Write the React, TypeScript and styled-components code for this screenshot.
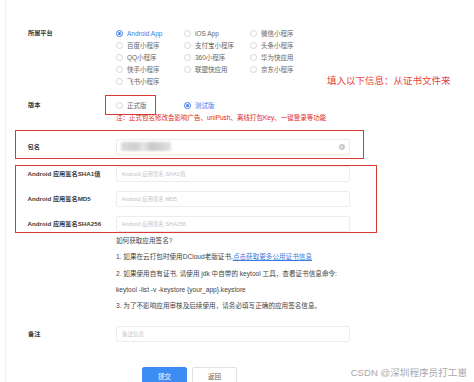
import React from "react";
import styled, { createGlobalStyle } from "styled-components";

const Global = createGlobalStyle`
  html, body { margin: 0; padding: 0; background: #fff; }
  body { font-family: "Liberation Sans", "Noto Sans CJK SC", sans-serif; }
  * { box-sizing: border-box; }
`;

const Page = styled.div`
  position: relative;
  height: 382px;
  overflow: hidden;
  margin-left: 5px;
  border-left: 1px solid #f0f0f0;
  padding: 27px 0 0 9px;
`;

const Row = styled.div<{ $align?: "start" | "center"; $gap?: number }>`
  display: grid;
  grid-template-columns: 88px auto;
  align-items: ${(p) => p.$align ?? "center"};
  padding-left: 13px;
  margin-top: ${(p) => p.$gap ?? 0}px;
`;

const PlatformRow = styled(Row)`
  grid-template-columns: 88px 211px auto;
`;

const Label = styled.div`
  font-size: 6.2px;
  line-height: 12px;
  font-weight: 700;
  color: #3a3a3a;
  white-space: nowrap;
`;

const OptionGrid = styled.div`
  display: grid;
  grid-template-columns: 68px 66px auto;
`;

const Option = styled.label<{ $on?: boolean }>`
  display: flex;
  align-items: center;
  gap: 4px;
  height: 12px;
  font-size: 6.5px;
  color: ${(p) => (p.$on ? "#3f78ee" : "#666")};
  white-space: nowrap;
`;

const Circle = styled.span<{ $on?: boolean }>`
  width: 7px;
  height: 7px;
  border-radius: 50%;
  border: 1px solid ${(p) => (p.$on ? "#3f78ee" : "#d6d6d6")};
  display: flex;
  align-items: center;
  justify-content: center;
  flex-shrink: 0;
  &::after {
    content: "";
    width: 3px;
    height: 3px;
    border-radius: 50%;
    background: ${(p) => (p.$on ? "#3f78ee" : "transparent")};
  }
`;

const Highlight = styled.span`
  position: relative;
  display: inline-flex;
  &::after {
    content: "";
    position: absolute;
    inset: -4px -9px -4px -11px;
    border: 1.5px solid #d93a33;
    pointer-events: none;
  }
`;

const Annotation = styled.div`
  align-self: end;
  font-size: 9.5px;
  line-height: 12px;
  color: #e5443d;
  white-space: nowrap;
`;

const Stack = styled.div`
  display: flex;
  flex-direction: column;
`;

const Note = styled.div`
  margin-top: 2px;
  font-size: 6.5px;
  line-height: 10px;
  color: #e0281e;
  white-space: nowrap;
`;

const Frame = styled.div<{ $width: number; $gap?: number }>`
  width: ${(p) => p.$width}px;
  border: 1.5px solid #d93a33;
  display: flex;
  flex-direction: column;
  gap: ${(p) => p.$gap ?? 0}px;
  ${Row} { padding-left: 11.5px; }
`;

const Frame1 = styled(Frame)`
  margin-top: 7px;
  padding: 7.5px 0 3.5px;
`;

const Frame2 = styled(Frame)`
  margin-top: 6px;
`;

const Input = styled.input`
  width: 234px;
  height: 16px;
  border: 1px solid #ececec;
  border-radius: 2px;
  padding: 0 5px;
  font-family: inherit;
  font-size: 5.5px;
  color: #333;
  outline: none;
  &::placeholder { color: #c2c2c2; }
`;

const Field = styled.div`
  width: 234px;
  height: 16px;
  border: 1px solid #ececec;
  border-radius: 2px;
  padding: 0 4px;
  display: flex;
  align-items: center;
`;

const Blurred = styled.div`
  width: 50px;
  height: 9px;
  background: linear-gradient(90deg, #dcdcdc 0%, #cfcfcf 30%, #e6e6e6 45%, #c8c8c8 60%, #d4d4d4 80%, #e2e2e2 100%);
  filter: blur(1.2px);
`;

const Clear = styled.span`
  margin-left: auto;
  width: 6px;
  height: 6px;
  border-radius: 50%;
  background: #c9c9c9;
  color: #fff;
  font-size: 5px;
  line-height: 6px;
  text-align: center;
`;

const Help = styled.div`
  font-size: 6.6px;
  line-height: 16.3px;
  color: #444;
  white-space: nowrap;
`;

const Link = styled.a`
  color: #3d7be0;
  text-decoration: underline;
`;

const ButtonBar = styled.div`
  margin-top: 24.5px;
  padding-left: 127px;
  display: flex;
  gap: 5px;
`;

const Button = styled.button<{ $primary?: boolean }>`
  width: 45px;
  height: 18px;
  border-radius: 2px;
  font-family: inherit;
  font-size: 6.5px;
  border: 1px solid ${(p) => (p.$primary ? "#3c8cf3" : "#e2e2e2")};
  background: ${(p) => (p.$primary ? "#3c8cf3" : "#fff")};
  color: ${(p) => (p.$primary ? "#fff" : "#555")};
  padding: 0;
`;

const Watermark = styled.div`
  position: absolute;
  right: 7px;
  bottom: 3px;
  font-size: 9.6px;
  line-height: 12px;
  color: #a8a8a8;
  white-space: nowrap;
`;

const platforms: [string, boolean][] = [
  ["Android App", true],
  ["iOS App", false],
  ["微信小程序", false],
  ["百度小程序", false],
  ["支付宝小程序", false],
  ["头条小程序", false],
  ["QQ小程序", false],
  ["360小程序", false],
  ["华为快应用", false],
  ["快手小程序", false],
  ["联盟快应用", false],
  ["京东小程序", false],
  ["飞书小程序", false],
];

export default function App() {
  return (
    <>
      <Global />
      <Page>
        <PlatformRow $align="start">
          <Label>所属平台</Label>
          <OptionGrid>
            {platforms.map(([name, on]) => (
              <Option key={name} $on={on}>
                <Circle $on={on} />
                {name}
              </Option>
            ))}
          </OptionGrid>
          <Annotation>填入以下信息：从证书文件来</Annotation>
        </PlatformRow>

        <Row $align="start" $gap={12}>
          <Label>版本</Label>
          <Stack>
            <OptionGrid>
              <Option>
                <Highlight>
                  <Option as="span">
                    <Circle />
                    正式版
                  </Option>
                </Highlight>
              </Option>
              <Option $on>
                <Circle $on />
                测试版
              </Option>
            </OptionGrid>
            <Note>注：正式包名修改会影响广告、uniPush、离线打包Key、一键登录等功能</Note>
          </Stack>
        </Row>

        <Frame1 $width={349}>
          <Row>
            <Label>包名</Label>
            <Field>
              <Blurred />
              <Clear>×</Clear>
            </Field>
          </Row>
        </Frame1>

        <Frame2 $width={362} $gap={9}>
          <Row>
            <Label>Android 应用签名SHA1值</Label>
            <Input placeholder="Android 应用签名 SHA1值" />
          </Row>
          <Row>
            <Label>Android 应用签名MD5</Label>
            <Input placeholder="Android 应用签名 MD5" />
          </Row>
          <Row>
            <Label>Android 应用签名SHA256</Label>
            <Input placeholder="Android 应用签名 SHA256" />
          </Row>
        </Frame2>

        <Row>
          <span />
          <Help>
            <div>如何获取应用签名?</div>
            <div>
              1. 如果在云打包时使用DCloud老版证书,<Link>点击获取更多公用证书信息</Link>
            </div>
            <div>2. 如果使用自有证书, 请使用 jdk 中自带的 keytool 工具，查看证书信息命令:</div>
            <div>keytool -list -v -keystore {"{your_app}"}.keystore</div>
            <div>3. 为了不影响应用审核及后续使用，请务必填写正确的应用签名信息。</div>
          </Help>
        </Row>

        <Row $gap={12}>
          <Label>备注</Label>
          <Input placeholder="备注信息" />
        </Row>

        <ButtonBar>
          <Button $primary>提交</Button>
          <Button>返回</Button>
        </ButtonBar>

        <Watermark>CSDN @深圳程序员打工崽</Watermark>
      </Page>
    </>
  );
}
